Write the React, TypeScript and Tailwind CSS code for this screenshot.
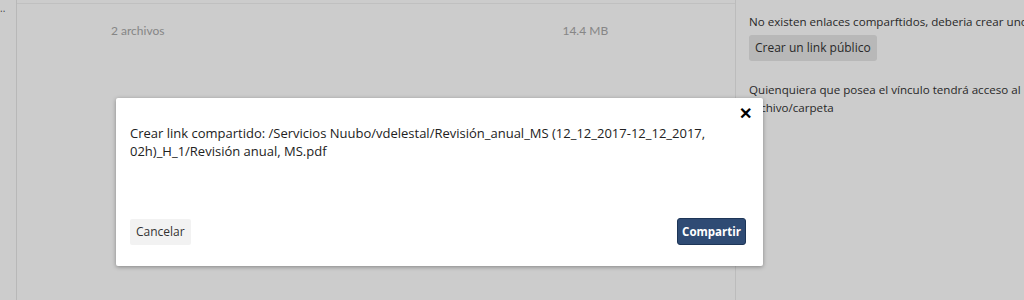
import React from "react";

export default function App() {
  return (
    <div className="relative h-[300px] w-[1024px] overflow-hidden bg-white text-[13px] text-[#333]" style={{ fontFamily: '"Open Sans", "Noto Sans", sans-serif' }}>
      <div className="flex h-full">
        <div className="w-[17px] shrink-0 border-r border-[#e6e6e6] pt-[2px] text-[10px] leading-[12px] text-[#555]">..</div>
        <div className="flex w-[719px] shrink-0 flex-col border-r border-[#ececec]">
          <div className="h-[4px] border-b border-[#f0f0f0]" />
          <div className="flex h-[54px] items-center text-[12px] text-[#a8a8a8]" style={{ fontFamily: 'Lato, "Open Sans", sans-serif' }}>
            <span className="ml-[94px]">2 archivos</span>
            <span className="ml-[398px]">14.4 MB</span>
          </div>
        </div>
        <div className="flex-1 pl-[13px] pt-[13px] text-[11.6px]">
          <p className="whitespace-nowrap leading-[18px]">No existen enlaces comparftidos, deberia crear uno</p>
          <button className="mt-[4px] h-[26px] rounded-[3px] bg-[#e6e6e6] px-[6px] text-[12px] text-[#333]">Crear un link público</button>
          <p className="mt-[20px] whitespace-nowrap leading-[18px]">Quienquiera que posea el vínculo tendrá acceso al</p>
          <p className="leading-[18px]">archivo/carpeta</p>
        </div>
      </div>
      <div className="absolute inset-0 bg-black/20" />
      <div className="absolute left-[116px] top-[98px] flex h-[168px] w-[647px] flex-col rounded-[2px] bg-white px-[14px] shadow-[0_1px_4px_rgba(0,0,0,0.35)]">
        <span className="absolute right-[11px] top-[5px] text-[16px] font-bold leading-[20px] text-black">✕</span>
        <p className="mt-[26px] pr-[20px] leading-[18px] text-[#222]">
          Crear link compartido: /Servicios Nuubo/vdelestal/Revisión_anual_MS (12_12_2017-12_12_2017, 02h)_H_1/Revisión anual, MS.pdf
        </p>
        <div className="mt-auto mb-[21px] flex items-center justify-between pr-[3px]">
          <button className="h-[26px] rounded-[2px] bg-[#f2f2f2] px-[6px] text-[12px] text-[#333]">Cancelar</button>
          <button className="h-[27px] rounded-[3px] border border-[#1d3557] bg-[#2f4b74] px-[4px] text-[11.5px] font-bold text-white">Compartir</button>
        </div>
      </div>
    </div>
  );
}
